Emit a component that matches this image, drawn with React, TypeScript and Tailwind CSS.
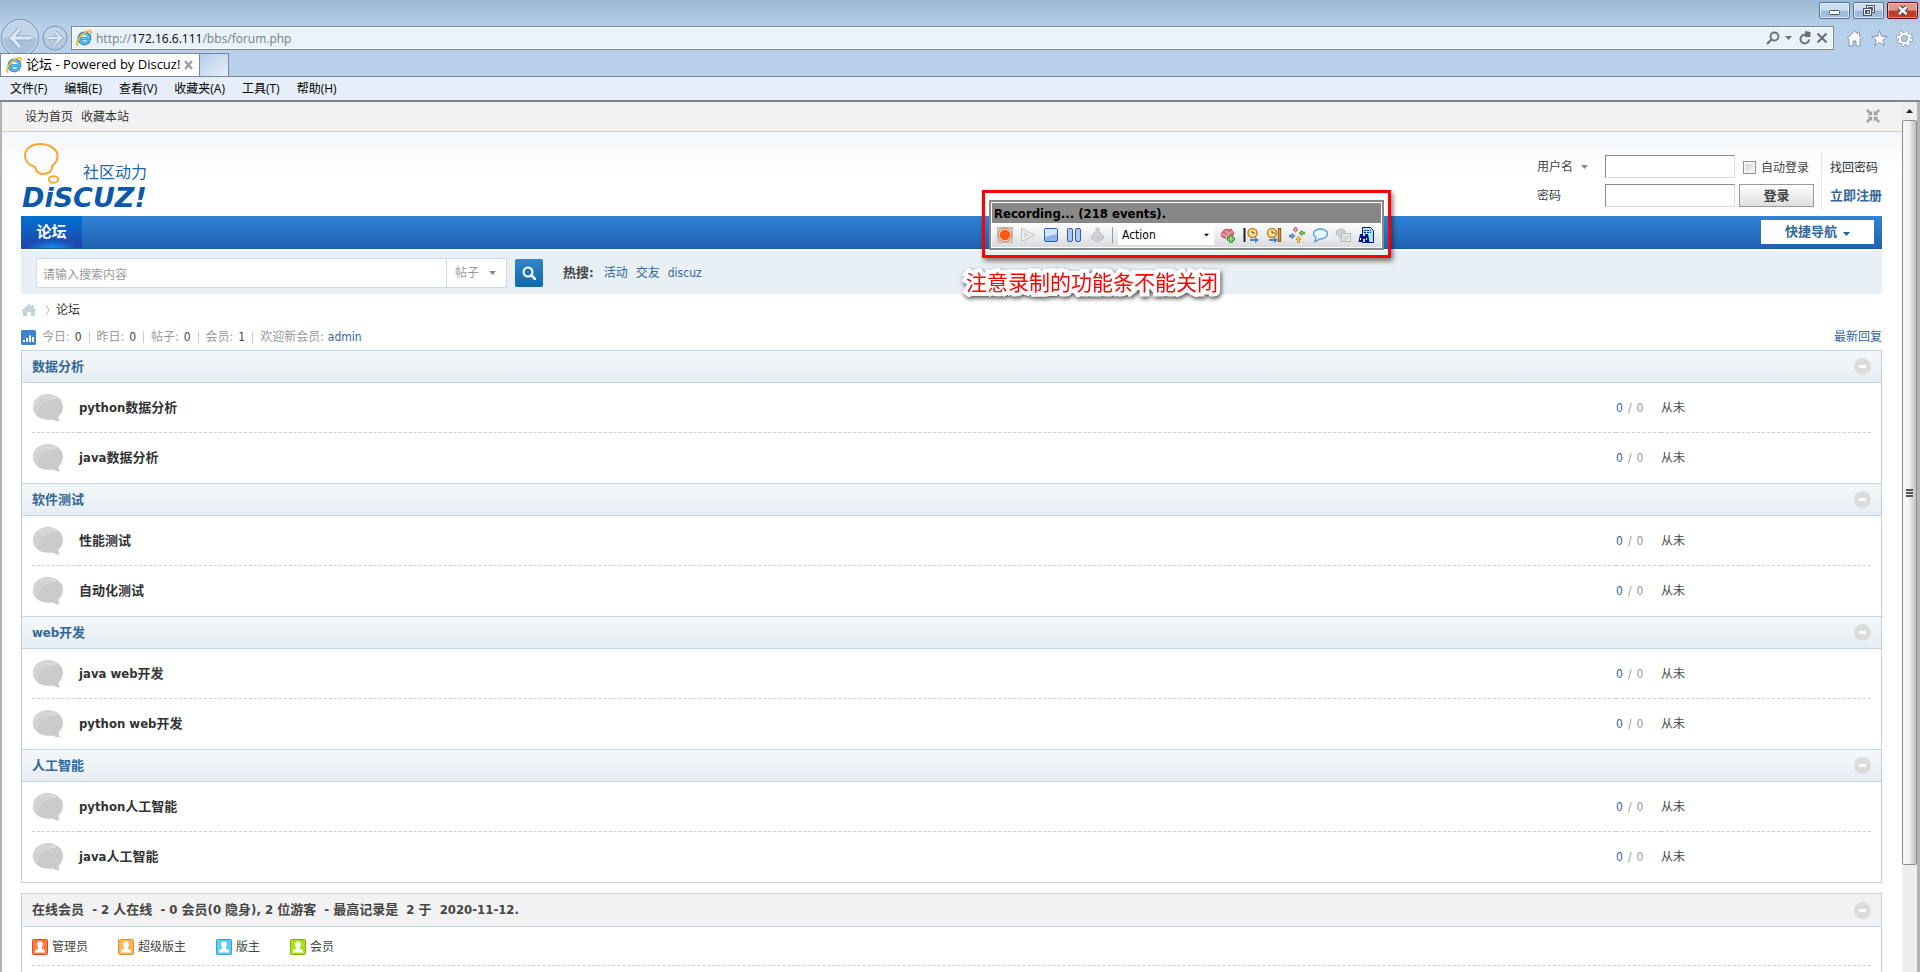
import React from 'react';

interface Forum {
  name: string;
  today: number;
  total: number;
  last: string;
}

interface Category {
  title: string;
  forums: Forum[];
}

const forum = (name: string): Forum => ({ name, today: 0, total: 0, last: '从未' });

const CATEGORIES: Category[] = [
  { title: '数据分析', forums: [forum('python数据分析'), forum('java数据分析')] },
  { title: '软件测试', forums: [forum('性能测试'), forum('自动化测试')] },
  { title: 'web开发', forums: [forum('java web开发'), forum('python web开发')] },
  { title: '人工智能', forums: [forum('python人工智能'), forum('java人工智能')] },
];

const MENUS = ['文件(F)', '编辑(E)', '查看(V)', '收藏夹(A)', '工具(T)', '帮助(H)'];

const STATS = [
  { label: '今日', value: 0 },
  { label: '昨日', value: 0 },
  { label: '帖子', value: 0 },
  { label: '会员', value: 1 },
];

const ROLES = [
  { label: '管理员', edge: '#e8451c', fill: '#ff7f45' },
  { label: '超级版主', edge: '#dd8f2c', fill: '#f8b95a' },
  { label: '版主', edge: '#2ba3d4', fill: '#5fcdf2' },
  { label: '会员', edge: '#7fb000', fill: '#aee01a' },
];

const IeLogo = () => (
  <svg viewBox="0 0 16 16" className="h-4 w-4 shrink-0" aria-hidden="true">
    <path d="M13.2 10.4A5.2 5.2 0 1 1 13.6 8.6H4.8" fill="none" stroke="#2b86c8" strokeWidth="3.4" />
    <path d="M12.800 10.4A4.900 4.900 0 1 1 13.2 8.500H5" fill="none" stroke="#5fbdf0" strokeWidth="1.800" />
    <path d="M2.600 15C-.2 15.600 .2 12 3.400 7.800C7 3 12.800 -.6 14.600 1.100C15.400 2 15.200 3.200 14.400 4.600" fill="none" stroke="#f5b81c" strokeWidth="1.600" />
  </svg>
);

const Caret = ({ className }: { className: string }) => (
  <svg viewBox="0 0 7 4" className={`pointer-events-none h-1 w-[7px] shrink-0 ${className}`} aria-hidden="true">
    <path d="M0 0h7L3.500 4z" fill="currentColor" />
  </svg>
);

const BrowserChrome = () => (
  <header className="shrink-0 bg-[#b8d0ea] font-['Open_Sans','Noto_Sans_CJK_SC',sans-serif] text-xs text-black">
    <div className="flex h-[26px] items-start justify-end gap-[3px] bg-linear-to-b from-[#9bb8d4] to-[#b8d0ea] pt-[2px] pr-[2px]">
      <button aria-label="最小化" className="h-[17px] w-[31px] rounded-[2px] border border-[#5b7394] bg-linear-to-b from-[#c9dcf0] from-45% to-[#9fbbdb] to-55% inset-ring inset-ring-white/60">
        <svg viewBox="0 0 29 15" aria-hidden="true"><rect x="9.500" y="7.500" width="10" height="4" rx="1" fill="#fff" stroke="#4a566a" /></svg>
      </button>
      <button aria-label="还原" className="h-[17px] w-[31px] rounded-[2px] border border-[#5b7394] bg-linear-to-b from-[#c9dcf0] from-45% to-[#9fbbdb] to-55% inset-ring inset-ring-white/60">
        <svg viewBox="0 0 29 15" aria-hidden="true">
          <path d="M13.500 3.500h6v5h-6z" fill="none" stroke="#4a566a" strokeWidth="3" />
          <path d="M13.500 3.500h6v5h-6z" fill="none" stroke="#fff" />
          <path d="M10.500 6.500h6v5h-6z" fill="#4a566a" stroke="#4a566a" strokeWidth="3" />
          <path d="M10.500 6.500h6v5h-6z" fill="#4a566a" stroke="#fff" />
          <path d="M13 8.500h2v1.500h-2z" fill="#fff" />
        </svg>
      </button>
      <button aria-label="关闭" className="h-[17px] w-[31px] rounded-[2px] border border-[#5a1418] bg-linear-to-b from-[#e2998c] from-45% to-[#bf3d26] to-55% inset-ring inset-ring-white/40">
        <svg viewBox="0 0 29 15" aria-hidden="true">
          <path d="M11 4l7.500 7M18.500 4l-7.500 7" stroke="#4b3f4c" strokeWidth="4.600" />
          <path d="M11 4l7.500 7M18.500 4l-7.500 7" stroke="#fff" strokeWidth="2.400" />
        </svg>
      </button>
    </div>

    <div className="flex h-[27px] items-start">
      <div className="-mt-2 flex h-[35px] w-[71px] items-start overflow-hidden">
        <button aria-label="后退" className="h-10 w-10 shrink-0">
          <svg viewBox="0 0 40 40" className="h-10 w-10">
            <circle cx="20" cy="20" r="18.500" fill="#a9c2dc" stroke="#7f94ae" />
            <path d="M2.500 20a17.500 17.500 0 0 1 35 0z" fill="#c0d4ea" />
            <circle cx="20" cy="20" r="17.300" fill="none" stroke="#d3e2f2" />
            <path d="M20 11l-8.500 9 8.500 9M12 20h19" fill="none" stroke="#8fa6c0" strokeWidth="5" />
            <path d="M20 11l-8.500 9 8.500 9M12 20h19" fill="none" stroke="#dfeaf6" strokeWidth="3.200" />
          </svg>
        </button>
        <button aria-label="前进" className="mt-[7px] h-[27px] w-[29px] shrink-0">
          <svg viewBox="0 0 28 27" className="h-[27px] w-7">
            <circle cx="15" cy="13" r="12" fill="#b3cae2" stroke="#7f94ae" />
            <path d="M4 13a11 11 0 0 1 22 0z" fill="#c3d6eb" />
            <path d="M15 7l6 6-6 6M21 13H8" fill="none" stroke="#8fa6c0" strokeWidth="4" />
            <path d="M15 7l6 6-6 6M21 13H8" fill="none" stroke="#dfeaf6" strokeWidth="2.400" />
          </svg>
        </button>
      </div>
      <div className="flex h-6 flex-1 items-center border border-[#77879c] bg-[#e9f1fa] pr-1 pl-1 inset-ring inset-ring-white">
        <IeLogo />
        <a href="#address" className="ml-1 flex-1 pt-px text-[#76808c]">
          http://<span className="text-black">172.16.6.111</span>/bbs/forum.php
        </a>
        <button aria-label="搜索" className="text-[#6b7078]">
          <svg viewBox="0 0 14 14" className="h-[14px] w-[14px]"><circle cx="8.500" cy="5.500" r="4" fill="none" stroke="currentColor" strokeWidth="1.800" /><path d="M5.500 8.500L1 13" stroke="currentColor" strokeWidth="2.200" /></svg>
        </button>
        <Caret className="mx-[5px] text-[#6b7078]" />
        <button aria-label="刷新" className="mr-1 ml-[2px] text-[#6b7078]">
          <svg viewBox="0 0 12 14" className="h-[14px] w-3"><path d="M10 8.500A4.300 4.300 0 1 1 7 4" fill="none" stroke="currentColor" strokeWidth="2" /><path d="M6 0l5.500 1v5L6 6z" fill="currentColor" /></svg>
        </button>
        <button aria-label="停止" className="text-[#6b7078]">
          <svg viewBox="0 0 14 14" className="h-[14px] w-[14px]"><path d="M2.500 2.500l9 9M11.500 2.500l-9 9" stroke="currentColor" strokeWidth="2.200" /></svg>
        </button>
      </div>
      <div className="flex h-6 items-center gap-2 pr-[7px] pl-3">
        <button aria-label="主页">
          <svg viewBox="0 0 17 17" className="h-[17px] w-[17px]"><path d="M8.500 1L1 8.500l1 1 1-.6V16h4v-5h3v5h4V8.900l1 .6 1-1-2.500-2.500V2h-2v2z" fill="#fff" stroke="#7c8ea6" strokeWidth=".9" /></svg>
        </button>
        <button aria-label="收藏夹">
          <svg viewBox="0 0 17 17" className="h-[17px] w-[17px]"><path d="M8.500 .8l2 5.400 5.800.2-4.500 3.600 1.600 5.700-4.900-3.300-4.900 3.300 1.600-5.700L.7 6.400l5.800-.2z" fill="#fff" stroke="#7c8ea6" strokeWidth=".9" /></svg>
        </button>
        <button aria-label="工具">
          <svg viewBox="0 0 17 17" className="h-[17px] w-[17px]">
            <circle cx="8.500" cy="8.500" r="6.500" fill="none" stroke="#7c8ea6" strokeWidth="3.600" strokeDasharray="2.800 2.300" />
            <circle cx="8.500" cy="8.500" r="4.600" fill="#aec6e2" stroke="#7c8ea6" strokeWidth="3.400" />
            <circle cx="8.500" cy="8.500" r="6.500" fill="none" stroke="#fff" strokeWidth="2.400" strokeDasharray="2.400 2.700" />
            <circle cx="8.500" cy="8.500" r="4.600" fill="none" stroke="#fff" strokeWidth="2.200" />
          </svg>
        </button>
      </div>
    </div>

    <div className="flex h-[23px] items-stretch">
      <div className="flex w-[200px] items-center border border-b-0 border-[#77879c] bg-white pr-[3px] pl-[5px]">
        <IeLogo />
        <span className="ml-1 flex-1 text-[13px] whitespace-nowrap">论坛 - Powered by Discuz!</span>
        <button aria-label="关闭标签页" className="text-[#9a9a9a]">
          <svg viewBox="0 0 14 14" className="h-[14px] w-[14px]"><path d="M3 3l7 8M10 3l-7 8" stroke="currentColor" strokeWidth="2.200" /></svg>
        </button>
      </div>
      <button aria-label="新标签页" className="w-[29px] border border-b-0 border-l-0 border-[#77879c] bg-linear-to-br from-[#b4cdea] to-[#e6eff9]" />
    </div>

    <nav className="flex h-[26px] items-center gap-[17px] border-t border-b-2 border-t-[#77879c] border-b-[#7f8790] bg-[#e5eef9] pl-[10px]">
      {MENUS.map((m) => (
        <button key={m} className="whitespace-nowrap">{m}</button>
      ))}
    </nav>
  </header>
);

const DiscuzLogo = () => (
  <a href="#home" className="block" aria-label="Discuz!">
    <svg viewBox="0 0 130 68" className="h-[68px] w-[130px] overflow-visible">
      <path d="M14 24C7 22 4 17 4 12.500C4 5.500 11 1 19.500 1S36.500 6 36.500 13C36.500 17 34.500 20.500 31 23C32 28 27 31 22 31C18 31 15 28.500 14 24z" fill="none" stroke="#f6a531" strokeWidth="2" />
      <ellipse cx="32.500" cy="36.500" rx="4.500" ry="3.300" fill="none" stroke="#f6a531" strokeWidth="2" />
      <text x="62" y="35" fontSize="16" fill="#1b65b1" fontFamily="'Noto Sans CJK SC', sans-serif">社区动力</text>
      <text x="1" y="64" fontSize="27" fontWeight="700" fontStyle="italic" fill="#0c59ab" fontFamily="'DejaVu Sans', sans-serif">DiSCUZ!</text>
    </svg>
  </a>
);

const LoginForm = () => (
  <form className="flex items-start" onSubmit={(e) => e.preventDefault()}>
    <div className="grid grid-cols-[68px_130px_80px] items-center gap-y-[6px] pt-[3px]">
      <div className="flex items-center gap-2">
        <select aria-label="登录方式" className="w-9 appearance-none bg-transparent text-xs text-[#444]">
          <option>用户名</option>
        </select>
        <Caret className="text-[#888]" />
      </div>
      <input aria-label="用户名" className="h-[23px] w-full border border-t-[#888] border-r-[#ddd] border-b-[#ddd] border-l-[#888] bg-white px-1" />
      <label className="flex items-center gap-[5px] pt-[2px] pl-2 whitespace-nowrap">
        <input type="checkbox" className="h-[13px] w-[13px] appearance-none border border-[#8e8f8f] bg-linear-to-br from-[#c0c5cc] to-white inset-ring-2 inset-ring-[#f4f4f4]" />
        自动登录
      </label>
      <label htmlFor="password">密码</label>
      <input id="password" type="password" className="h-[23px] w-full border border-t-[#888] border-r-[#ddd] border-b-[#ddd] border-l-[#888] bg-white px-1" />
      <button className="ml-1 h-[23px] w-[75px] border border-[#999] bg-linear-to-b from-white to-[#dedede] text-[13px] font-bold">登录</button>
    </div>
    <div className="ml-[6px] flex h-[58px] flex-col justify-between border-l border-[#e0e6ea] pt-2 pb-[6px] pl-2 leading-4">
      <a href="#lost" className="text-[#333]">找回密码</a>
      <a href="#register" className="text-[13px] font-bold text-[#369]">立即注册</a>
    </div>
  </form>
);

const SearchBar = () => (
  <form className="mt-[2px] flex h-[43px] shrink-0 items-center bg-[#e8eff5] pl-[15px]" onSubmit={(e) => e.preventDefault()}>
    <input aria-label="搜索内容" placeholder="请输入搜索内容" className="h-[30px] w-[411px] border border-[#cedbe3] bg-white px-[6px] pt-1 placeholder:text-[#999]" />
    <div className="flex h-[30px] w-[60px] items-center border border-l-0 border-[#cedbe3] bg-white pl-2 text-[#999]">
      <select aria-label="搜索类型" className="w-[34px] appearance-none bg-transparent">
        <option>帖子</option>
      </select>
      <Caret className="text-[#888]" />
    </div>
    <button aria-label="搜索" className="ml-2 flex h-7 w-7 items-center justify-center rounded-[2px] bg-linear-to-b from-[#3186c8] to-[#1068ae]">
      <svg viewBox="0 0 14 14" className="h-[14px] w-[14px]"><circle cx="6" cy="6" r="4.500" fill="none" stroke="#fff" strokeWidth="2" /><path d="M9.200 9.200L13 13" stroke="#fff" strokeWidth="2.600" strokeLinecap="round" /></svg>
    </button>
    <strong className="ml-5 text-[13px]">热搜:</strong>
    <div className="ml-[10px] flex gap-2 text-[#369]">
      <a href="#hd">活动</a>
      <a href="#jy">交友</a>
      <a href="#discuz">discuz</a>
    </div>
  </form>
);

const Collapse = () => (
  <button aria-label="收起" className="flex h-[17px] w-[17px] items-center justify-center rounded-full bg-[#dcdcdc]">
    <span className="h-[3px] w-[7px] bg-white" />
  </button>
);

const Bubble = () => (
  <svg viewBox="0 0 32 30" className="h-[30px] w-8" aria-hidden="true">
    <path d="M16 1C24.500 1 31 6.500 31 14C31 18 29 21.500 26.500 23.500C26.500 25.500 27 27 28 28.500C25 28.500 22.500 27.500 20.500 26.500C9 28.500 1 22 1 14C1 6.500 7.500 1 16 1z" fill="#cbcbcb" />
    <path d="M3 18C4 9 13 3.500 27 5.500C23.500 2.300 20 1.500 16 1.500C7.500 1.500 1.500 7 1.500 14C1.500 15.500 2 17 3 18z" fill="#d6d6d6" />
    <path d="M4.500 20C4.500 12 12 6 24 5" fill="none" stroke="#e4e4e4" strokeWidth="1" />
  </svg>
);

const ForumList = () => (
  <div className="border-x border-b border-[#c8cdd0]">
    {CATEGORIES.map((c) => (
      <section key={c.title}>
        <div className="flex h-[33px] items-center justify-between border-y border-[#bfd7e6] bg-linear-to-b from-[#f4f8fa] to-[#e6edf2] px-[10px]">
          <h2 className="text-[13px] font-bold text-[#369]"><a href="#category">{c.title}</a></h2>
          <Collapse />
        </div>
        <div className="px-[10px]">
          <table className="w-full border-separate border-spacing-0">
            <tbody>
              {c.forums.map((f) => (
                <tr key={f.name} className="group">
                  <td className="h-[50px] w-[47px] border-b border-dashed border-[#cdcdcd] group-last:border-transparent"><Bubble /></td>
                  <td className="border-b border-dashed border-[#cdcdcd] text-[13px] font-bold text-[#333] group-last:border-transparent"><a href="#forum">{f.name}</a></td>
                  <td className="w-[45px] border-b border-dashed border-[#cdcdcd] text-[#999] group-last:border-transparent">
                    <span className="text-[#369]">{f.today}</span><span className="mx-[5px]">/</span>{f.total}
                  </td>
                  <td className="w-[210px] border-b border-dashed border-[#cdcdcd] group-last:border-transparent">{f.last}</td>
                </tr>
              ))}
            </tbody>
          </table>
        </div>
      </section>
    ))}
  </div>
);

const OnlineBox = () => (
  <section className="mt-[10px] flex-1 border border-b-0 border-[#c8cdd0]">
    <div className="flex h-[33px] items-center justify-between border-b border-[#bfd7e6] bg-[#f2f2f2] px-[10px]">
      <h2 className="text-[13px] font-bold whitespace-pre">在线会员  - 2 人在线  - 0 会员(0 隐身), 2 位游客  - 最高记录是  2 于  2020-11-12.</h2>
      <Collapse />
    </div>
    <ul className="mx-[10px] flex h-[39px] items-center gap-[30px] border-b border-dashed border-[#cdcdcd] pt-px">
      {ROLES.map((r) => (
        <li key={r.label} className="flex items-center gap-1">
          <svg viewBox="0 0 16 16" className="h-4 w-4" aria-hidden="true">
            <rect x=".5" y=".5" width="15" height="15" rx="1" fill={r.fill} stroke={r.edge} />
            <path d="M8 2.500C10.200 2.500 11 4 10.800 5.800C10.600 7.600 9.800 8.300 9.600 9.200C10 10.300 13.300 10.200 13.300 13.500H2.700C2.700 10.200 6 10.300 6.400 9.200C6.200 8.300 5.400 7.600 5.200 5.800C5 4 5.800 2.500 8 2.500z" fill="#fff" />
          </svg>
          {r.label}
        </li>
      ))}
    </ul>
  </section>
);

const ToolButton = ({ label, children }: { label: string; children: React.ReactNode }) => (
  <button aria-label={label} className="flex h-[18px] w-[18px] shrink-0 items-center justify-center">
    <svg viewBox="0 0 16 16" className="h-4 w-4">{children}</svg>
  </button>
);

const Recorder = () => (
  <div className="absolute top-[190px] left-[982px] border-3 border-[#f00] px-1 pt-[7px] pb-[5px] shadow-[2px_3px_5px_rgba(0,0,0,0.5)]">
    <div className="w-[395px] border-2 border-[#888]">
      <div className="border border-white">
        <div className="flex h-5 items-center bg-[#888] pt-px pl-[2px] text-[13px] font-bold text-black">Recording... (218 events).</div>
        <div className="flex h-6 items-center justify-between bg-linear-to-b from-white to-[#d9dce0] pr-[6px] pl-1">
          <div className="flex items-center gap-[5px]">
            <ToolButton label="录制"><rect width="16" height="16" fill="#cfcac2" /><rect x=".5" y=".5" width="15" height="15" fill="none" stroke="#bdb8b0" /><circle cx="8" cy="8" r="6.600" fill="#fbe9dc" stroke="#e8643a" strokeWidth=".8" /><circle cx="8" cy="8" r="5.300" fill="#f85a12" /></ToolButton>
            <ToolButton label="播放"><path d="M1.500 1.500l13.500 6.500-13.500 6.500z" fill="#eceeef" stroke="#bfc3c7" /><path d="M4 5l6 3-6 3z" fill="#d4d7da" /></ToolButton>
            <ToolButton label="停止"><rect x="1.500" y="1.500" width="13" height="13" rx="1.500" fill="#8db4f0" stroke="#2f5ca8" /><path d="M2 2h12v5L2 10z" fill="#d3e3fb" /></ToolButton>
            <ToolButton label="暂停"><rect x="1.500" y="1.500" width="5" height="13" rx="1.500" fill="#a9c9f6" stroke="#2f5ca8" /><rect x="9.500" y="1.500" width="5" height="13" rx="1.500" fill="#a9c9f6" stroke="#2f5ca8" /></ToolButton>
            <ToolButton label="单步"><path d="M7 1h3v5h3L8.500 10 4 6h3z" fill="#d4d7da" stroke="#b4b8bc" strokeWidth=".8" /><path d="M2 9l2-1 4 3.500L12.500 8l2 1v2.500L8.500 15 2 11.500z" fill="#cdd0d3" stroke="#b4b8bc" strokeWidth=".8" /></ToolButton>
            <span className="ml-px h-4 w-px bg-[#999]" />
            <div className="flex h-5 w-[96px] items-center bg-white pr-1 pl-1">
              <select aria-label="Action" className="flex-1 appearance-none text-xs text-black"><option>Action</option></select>
              <Caret className="scale-75 text-black" />
            </div>
          </div>
          <div className="flex items-center gap-[5px]">
            <ToolButton label="新建事务"><path d="M1 7l3-4 3-1 1 1 3-1 3 4-2 5-5 1-5-2z" fill="#d4727a" stroke="#b34a55" strokeWidth=".8" /><path d="M1.500 7l5 2 6-5M5 4l5 3M6.500 9v3" fill="none" stroke="#f3c0c3" /><path d="M11 8v8M7 12h8" stroke="#3c9a34" strokeWidth="3.600" /><path d="M11 9v6M8 12h6" stroke="#b4e8a0" strokeWidth="1.200" /></ToolButton>
            <ToolButton label="开始事务"><path d="M1.500 1v14" stroke="#222" strokeWidth="2" /><circle cx="9.500" cy="6" r="4.500" fill="#f9e4a0" stroke="#c9821c" strokeWidth="1.500" /><path d="M9 3.500V6h3" fill="none" stroke="#7a4a10" /><path d="M7 12h5v-2l4 3-4 3v-2H7z" fill="#4e86c8" /></ToolButton>
            <ToolButton label="结束事务"><circle cx="6" cy="6" r="4.500" fill="#f9e4a0" stroke="#c9821c" strokeWidth="1.500" /><path d="M6 3.500V6h3" fill="none" stroke="#7a4a10" /><path d="M3 12h5v-2l4 3-4 3v-2H3z" fill="#4e86c8" /><path d="M13.500 1v14" stroke="#8a5a10" strokeWidth="3.400" /><path d="M13.500 2v12" stroke="#e0a030" strokeWidth="1.400" /></ToolButton>
            <ToolButton label="集合点"><path d="M5.500 .5h2v2h1.500L6.500 5.500 4 2.500h1.500z" fill="#f0a0a0" stroke="#d0505a" strokeWidth=".8" /><path d="M8.500 15.500h2v-3H12L9.500 9 7 12.500h1.500z" fill="#fcc850" stroke="#d89010" strokeWidth=".8" /><path d="M.5 8h2.500V6.500L6 9l-3 2.500V10H.5z" fill="#7d9cd8" stroke="#4a6cb4" strokeWidth=".8" /><path d="M15.500 5H13V3.500L10 6l3 2.500V7h2.500z" fill="#80d058" stroke="#3a9428" strokeWidth=".8" /></ToolButton>
            <ToolButton label="注释"><path d="M8.500 2C13 2 15.500 4.500 15.500 7S12.500 12 8 12L3 14.500l1-4C2 9.500 1.500 8.500 1.500 7C1.500 4.500 4 2 8.500 2z" fill="#eaf6ff" stroke="#4a9ad8" strokeWidth="1.300" /></ToolButton>
            <ToolButton label="插入检查"><path d="M1 7a5 5 0 0 1 9-3v3H7v5z" fill="#d4d4d4" stroke="#b4b4b4" /><rect x="6.500" y="6.500" width="9" height="8" fill="#f0f0f0" stroke="#b4b4b4" /><path d="M8 9h6M8 11h6M8 13h4" stroke="#c0c0c0" /></ToolButton>
            <ToolButton label="文本检查"><path d="M4.500 .5h8l3 3v12h-11z" fill="#9ff0f4" stroke="#10108c" /><path d="M6 3.500h7M6 5.500h7" stroke="#10108c" strokeDasharray="2 1" /><path d="M2 7h3v2h2V7h3l1.500 8H7v-3H5v3H.5z" fill="#10108c" /><path d="M2.500 11v2M8.500 11v2" stroke="#fff" /></ToolButton>
          </div>
        </div>
      </div>
    </div>
  </div>
);

const ScrollBar = () => (
  <div aria-hidden="true" className="flex w-[18px] shrink-0 flex-col border-r-3 border-[#b4b4b4] bg-[#eee] pb-[107px]">
    <div className="flex h-[18px] items-center justify-center">
      <svg viewBox="0 0 7 4" className="h-1 w-[7px]"><path d="M3.500 0L7 4H0z" fill="#222" /></svg>
    </div>
    <div className="flex flex-1 flex-col items-center justify-center gap-[1px] rounded-[2px] border border-[#8c8c8c] bg-linear-to-r from-[#f5f5f5] from-40% to-[#c0c1c6]">
      <span className="h-[2px] w-[7px] bg-[#555]" />
      <span className="h-[2px] w-[7px] bg-[#555]" />
      <span className="h-[2px] w-[7px] bg-[#555]" />
    </div>
  </div>
);

export default function App() {
  return (
    <div className="relative flex h-screen flex-col overflow-hidden bg-white font-['DejaVu_Sans_Condensed','Noto_Sans_CJK_SC',sans-serif] text-xs text-[#444]">
      <BrowserChrome />
      <div className="flex min-h-0 flex-1 border-l-2 border-[#b4b4b4]">
        <main className="flex min-w-0 flex-1 flex-col">
          <div className="flex h-[30px] shrink-0 items-center justify-between border-b border-[#cdcdcd] bg-[#f2f2f2] pr-[22px] pl-[23px]">
            <div className="flex gap-2 text-[#333]">
              <a href="#sethome">设为首页</a>
              <a href="#favorite">收藏本站</a>
            </div>
            <button aria-label="切换到窄版" className="pb-[2px] text-[#a3a3a3]">
              <svg viewBox="0 0 14 14" className="h-[14px] w-[14px]">
                <path d="M.8 .8l4 4M13.200 .8L9.200 4.800M.8 13.200l4-4M13.200 13.200L9.200 9.200" stroke="currentColor" strokeWidth="2.600" />
                <path d="M6.200 1.500V6.200H1.500zM7.800 1.500V6.200h4.700zM6.200 12.500V7.800H1.500zM7.800 12.500V7.800h4.700z" fill="currentColor" />
              </svg>
            </button>
          </div>
          <div className="flex min-h-0 flex-1 flex-col bg-linear-to-b from-[#f4f8fb] to-white to-[50px] pr-5 pl-[19px]">
            <div className="flex h-[84px] shrink-0 justify-between">
              <div className="pt-[11px]"><DiscuzLogo /></div>
              <div className="pt-5"><LoginForm /></div>
            </div>

            <nav className="flex h-[33px] shrink-0 items-stretch justify-between border-b border-[#1c58a4] bg-linear-to-b from-[#3083d6] to-[#2062b0] pr-2">
              <a href="#forum" className="flex w-[61px] items-center justify-center bg-[radial-gradient(ellipse_26px_8px_at_50%_100%,#1090f0,transparent),linear-gradient(#0072d0,#2344ab)] pt-[2px] text-[15px] font-bold text-white">论坛</a>
              <button className="my-1 flex w-[113px] items-center justify-center gap-[6px] bg-white text-[13px] font-bold text-[#369]">
                快捷导航
                <Caret className="mt-1 text-[#1068ae]" />
              </button>
            </nav>

            <SearchBar />

            <div className="flex h-[32px] shrink-0 items-center">
              <a href="#home" aria-label="首页">
                <svg viewBox="0 0 16 14" className="h-[14px] w-4"><path d="M8 1L0 8h2v5h4V9h4v4h4V8h2l-3-2.600V2h-2v1.600z" fill="#c3d3de" /></svg>
              </a>
              <svg viewBox="0 0 5 10" className="mr-[6px] ml-2 h-[10px] w-[5px]"><path d="M1 0l3 5-3 5" fill="none" stroke="#bbb" /></svg>
              <a href="#forum" className="text-[#333]">论坛</a>
            </div>

            <div className="mb-[2px] flex h-[22px] shrink-0 items-center text-[#999]">
              <svg viewBox="0 0 15 15" className="mr-[6px] h-[15px] w-[15px]"><rect width="15" height="15" rx="1.500" fill="#3d84d2" /><path d="M2 10h2v2H2zM5 8h2v4H5zM8 5.500h2V12H8zM11 7h2v5h-2z" fill="#fff" /></svg>
              {STATS.map((s) => (
                <span key={s.label} className="mr-[7px] flex items-center">
                  {s.label}:<span className="ml-[5px] text-[#444]">{s.value}</span>
                  <span className="ml-[7px] h-3 w-px bg-[#ccc]" />
                </span>
              ))}
              <span>欢迎新会员:</span>
              <a href="#admin" className="ml-1 text-[#369]">admin</a>
              <a href="#latest" className="ml-auto text-[#369]">最新回复</a>
            </div>

            <ForumList />
            <OnlineBox />
          </div>
        </main>
        <ScrollBar />
      </div>

      <Recorder />
      <p className="absolute top-[269px] left-[966px] text-[21px] leading-7 whitespace-nowrap text-[#f00] drop-shadow-[1px_2px_2px_rgba(0,0,0,0.7)] [paint-order:stroke_fill] [-webkit-text-stroke:8px_white]">
        注意录制的功能条不能关闭
      </p>
    </div>
  );
}
